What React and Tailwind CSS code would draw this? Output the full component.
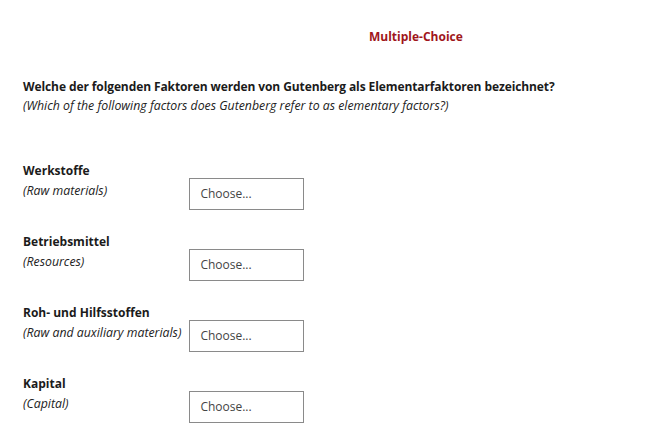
const items = [
  { de: "Werkstoffe", en: "(Raw materials)" },
  { de: "Betriebsmittel", en: "(Resources)" },
  { de: "Roh- und Hilfsstoffen", en: "(Raw and auxiliary materials)" },
  { de: "Kapital", en: "(Capital)" },
];

export default function App() {
  return (
    <div
      className="min-h-[438px] bg-white text-[#1b1b1b]"
      style={{ fontFamily: '"Open Sans", "Noto Sans", sans-serif' }}
    >
      <div className="pt-[28px] pl-[369px]">
        <h1 className="text-[12px] font-bold leading-[18px] text-[#a0161b]">
          Multiple-Choice
        </h1>
      </div>

      <div className="px-[23px] pt-[32px]">
        <p className="text-[12px] font-bold leading-[18px] tracking-[-0.1px]">
          Welche der folgenden Faktoren werden von Gutenberg als Elementarfaktoren bezeichnet?
        </p>
        <p className="text-[12.3px] italic leading-[20px] text-[#222]">
          (Which of the following factors does Gutenberg refer to as elementary factors?)
        </p>

        <div className="mt-[46px] grid grid-cols-[max-content_max-content] gap-x-[8px]">
          {items.map((item) => (
            <div key={item.de} className="contents">
              <div className="h-[71px]">
                <div className="text-[12px] font-bold leading-[18px]">{item.de}</div>
                <div className="text-[12.3px] italic leading-[22px] text-[#222]">{item.en}</div>
              </div>
              <div className="pt-[16px]">
                <div className="flex h-[32px] w-[115px] items-center border border-[#8a8a8a] pl-[10px] text-[12px] text-[#444]">
                  Choose...
                </div>
              </div>
            </div>
          ))}
        </div>
      </div>
    </div>
  );
}
